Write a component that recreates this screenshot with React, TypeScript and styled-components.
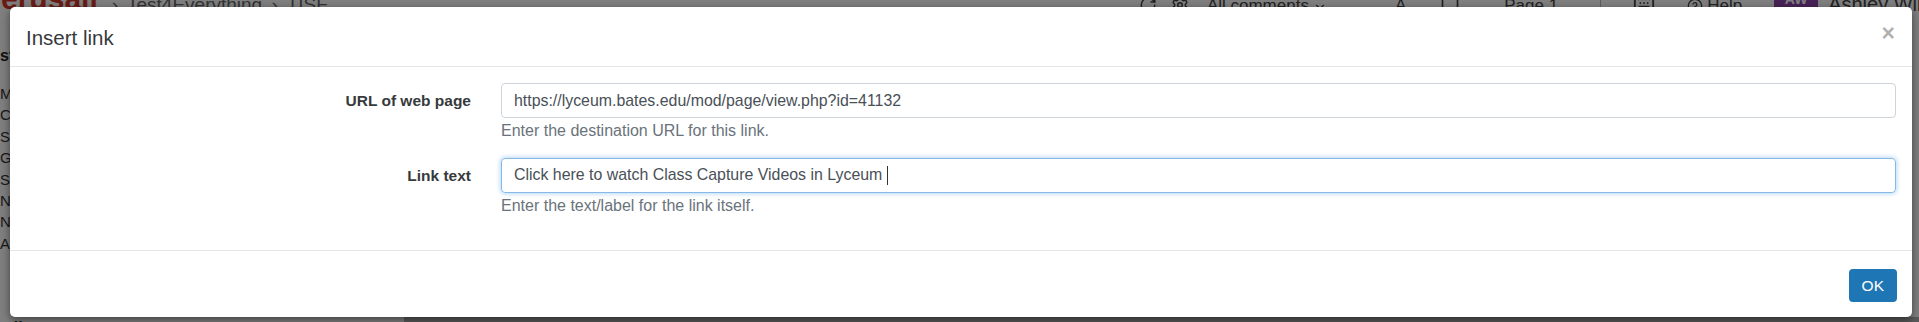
import React from "react";
import styled, { createGlobalStyle } from "styled-components";
import { RotateCw, Settings, Square, Keyboard, HelpCircle, ChevronDown } from "lucide-react";

const GlobalStyle = createGlobalStyle`
  html, body {
    margin: 0;
    padding: 0;
    width: 1919px;
    height: 322px;
    overflow: hidden;
    background: #fff;
  }
  body {
    font-family: "Helvetica Neue", Helvetica, "Liberation Sans", Arial, sans-serif;
  }
  * { box-sizing: border-box; }
`;

const Page = styled.div`
  position: relative;
  width: 1919px;
  height: 322px;
  overflow: hidden;
  display: flex;
  flex-direction: column;
  background: #fff;
`;

/* ---------- background page (mostly hidden by the dialog) ---------- */

const TopBar = styled.header`
  flex: 0 0 14px;
  display: flex;
  align-items: flex-end;
  overflow: hidden;
  color: #555;
  white-space: nowrap;
`;

const Logo = styled.span`
  flex-shrink: 0;
  font-size: 30px;
  font-weight: 700;
  line-height: 1;
  color: #d4372b;
  margin-left: -19px;
`;

const Crumbs = styled.span`
  flex-shrink: 0;
  font-size: 19px;
  line-height: 1;
  color: #666;
  margin-left: 14px;
  word-spacing: 4px;
`;

const NavItem = styled.span<{ $ml: number }>`
  flex-shrink: 0;
  display: inline-flex;
  align-items: flex-end;
  gap: 4px;
  margin-left: ${(p) => p.$ml}px;
  font-size: 17px;
  line-height: 1;
  color: #444;
`;

const NavDivider = styled.span<{ $ml: number }>`
  flex-shrink: 0;
  width: 1px;
  height: 20px;
  background: #bbb;
  margin-left: ${(p) => p.$ml}px;
`;

const Avatar = styled.span<{ $ml: number }>`
  flex-shrink: 0;
  width: 44px;
  height: 30px;
  border-radius: 4px;
  background: #8e44ad;
  color: #fff;
  font-size: 14px;
  font-weight: 700;
  display: inline-flex;
  align-items: center;
  justify-content: center;
  margin-left: ${(p) => p.$ml}px;
`;

const UserName = styled.span`
  flex-shrink: 0;
  margin-left: 10px;
  font-size: 20px;
  line-height: 1;
  color: #444;
`;

const Main = styled.main`
  flex: 1;
  display: flex;
  min-height: 0;
`;

const Sidebar = styled.nav`
  width: 220px;
  padding-top: 30px;
  display: flex;
  flex-direction: column;
`;

const SideHeading = styled.div`
  font-size: 16px;
  font-weight: 700;
  line-height: 24px;
  color: #222;
  margin-bottom: 15px;
`;

const SideItem = styled.div`
  font-size: 15px;
  line-height: 21.4px;
  color: #333;
`;

const BottomBar = styled.footer`
  flex: 0 0 5px;
  display: flex;
  overflow: hidden;
`;

const BottomLeft = styled.div`
  width: 404px;
  font-size: 16px;
  font-weight: 700;
  line-height: 20px;
  color: #222;
  padding-top: 1px;
  text-indent: -21px;
`;

const BottomRight = styled.div`
  flex: 1;
  background: #b4b4b4;
`;

const Backdrop = styled.div`
  position: absolute;
  inset: 0;
  background: rgba(0, 0, 0, 0.5);
`;

/* ---------- dialog ---------- */

const ModalLayer = styled.div`
  position: absolute;
  inset: 0;
  padding: 7px 7px 5px 10px;
  display: flex;
`;

const Dialog = styled.div`
  flex: 1;
  display: flex;
  flex-direction: column;
  background: #fff;
  border-radius: 5px;
  box-shadow: 0 3px 9px rgba(0, 0, 0, 0.5);
  overflow: hidden;
`;

const Header = styled.div`
  flex: 0 0 60px;
  display: flex;
  align-items: center;
  justify-content: space-between;
  padding: 0 16px;
  border-bottom: 1px solid #e6e6e6;
`;

const Title = styled.h5`
  margin: 3px 0 0;
  font-size: 20.5px;
  font-weight: 400;
  line-height: 1.5;
  color: #373a3c;
`;

const CloseButton = styled.button`
  background: none;
  border: 0;
  padding: 0;
  margin: -7px 1px 0 0;
  font-family: inherit;
  font-size: 23px;
  font-weight: 700;
  line-height: 1;
  color: #000;
  opacity: 0.3;
  cursor: pointer;
`;

const Body = styled.div`
  padding: 16px 16px 18px;
  display: flex;
  flex-direction: column;
`;

const FormGroup = styled.div`
  display: flex;
  margin: 0 -15px 15px;
`;

const LabelCol = styled.label`
  flex: 0 0 25%;
  padding: 0 15px;
  text-align: right;
  font-size: 15.5px;
  font-weight: 700;
  line-height: 35px;
  color: #373a3c;
`;

const FieldCol = styled.div`
  flex: 0 0 75%;
  padding: 0 15px;
`;

const Field = styled.div<{ $focused?: boolean }>`
  height: 35px;
  display: flex;
  align-items: center;
  padding: 0 12px;
  border: 1px solid ${(p) => (p.$focused ? "#84b9e8" : "#ced4da")};
  border-radius: 4px;
  box-shadow: ${(p) => (p.$focused ? "0 0 4px 1px rgba(102, 170, 230, 0.45)" : "none")};
  font-size: 15.9px;
  color: #495057;
  white-space: pre;
`;

const Caret = styled.span`
  display: inline-block;
  width: 1px;
  height: 19px;
  background: #333;
  margin-left: 5px;
`;

const Help = styled.div`
  margin-top: 2px;
  font-size: 16px;
  line-height: 22.5px;
  color: #6a737b;
`;

const Footer = styled.div`
  border-top: 1px solid #e6e6e6;
  padding: 18px 15px 16px;
  display: flex;
  justify-content: flex-end;
`;

const OkButton = styled.button`
  height: 33px;
  padding: 0 13px;
  border: 0;
  border-radius: 4px;
  background: #1e76b5;
  color: #fff;
  font-family: inherit;
  font-size: 15.5px;
  cursor: pointer;
`;

const sidebarItems = ["Materials", "Comments", "Students", "Gradebook", "Settings", "Notifications", "News", "Analytics"];

export default function App() {
  return (
    <>
      <GlobalStyle />
      <Page>
        <TopBar>
          <Logo>Perusall</Logo>
          <Crumbs>› Test4Everything › TISF</Crumbs>
          <NavItem $ml={811}>
            <RotateCw size={18} />
          </NavItem>
          <NavItem $ml={14}>
            <Settings size={18} />
          </NavItem>
          <NavItem $ml={18}>
            All comments <ChevronDown size={14} />
          </NavItem>
          <NavItem $ml={68}>A</NavItem>
          <NavItem $ml={34}>
            <Square size={20} />
          </NavItem>
          <NavItem $ml={44}>Page 1</NavItem>
          <NavDivider $ml={42} />
          <NavItem $ml={32}>
            <Keyboard size={22} />
          </NavItem>
          <NavItem $ml={32}>
            <HelpCircle size={16} /> Help
          </NavItem>
          <Avatar $ml={32}>AW</Avatar>
          <UserName>Ashley Wilgus</UserName>
        </TopBar>
        <Main>
          <Sidebar>
            <SideHeading>st</SideHeading>
            {sidebarItems.map((s) => (
              <SideItem key={s}>{s}</SideItem>
            ))}
          </Sidebar>
        </Main>
        <BottomBar>
          <BottomLeft>Headings</BottomLeft>
          <BottomRight />
        </BottomBar>
        <Backdrop />
        <ModalLayer>
          <Dialog role="dialog" aria-label="Insert link">
            <Header>
              <Title>Insert link</Title>
              <CloseButton aria-label="Close">×</CloseButton>
            </Header>
            <Body>
              <FormGroup>
                <LabelCol>URL of web page</LabelCol>
                <FieldCol>
                  <Field role="textbox">https://lyceum.bates.edu/mod/page/view.php?id=41132</Field>
                  <Help>Enter the destination URL for this link.</Help>
                </FieldCol>
              </FormGroup>
              <FormGroup>
                <LabelCol>Link text</LabelCol>
                <FieldCol>
                  <Field role="textbox" $focused>
                    Click here to watch Class Capture Videos in Lyceum
                    <Caret />
                  </Field>
                  <Help>Enter the text/label for the link itself.</Help>
                </FieldCol>
              </FormGroup>
            </Body>
            <Footer>
              <OkButton>OK</OkButton>
            </Footer>
          </Dialog>
        </ModalLayer>
      </Page>
    </>
  );
}
